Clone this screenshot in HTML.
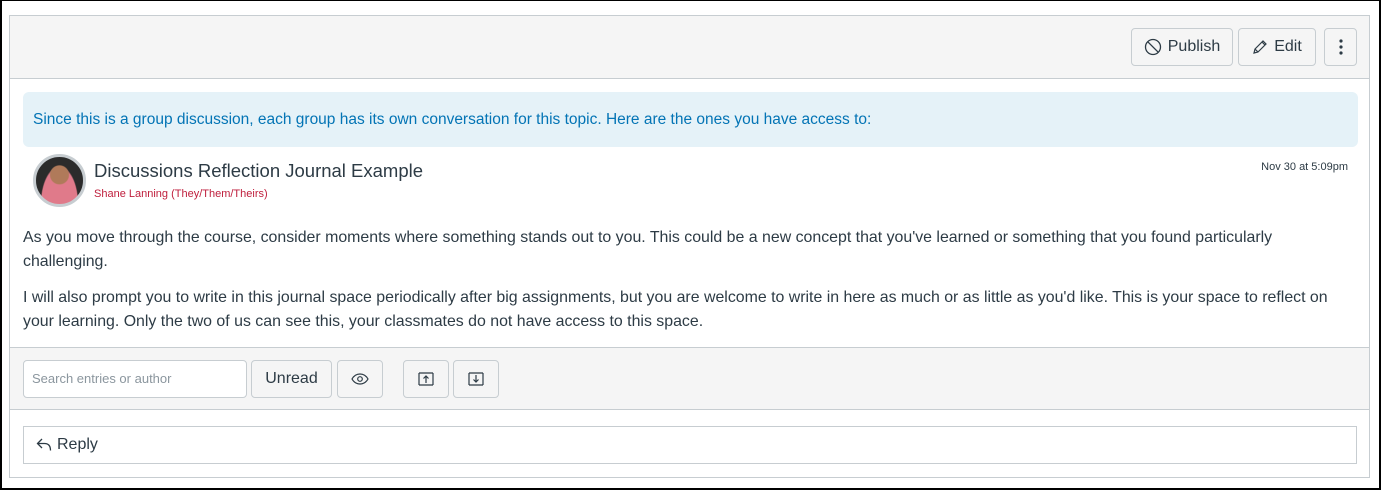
<!DOCTYPE html><html><head><style>
*{box-sizing:border-box;margin:0;padding:0}
body{width:1381px;height:490px;background:#fff;font-family:"Liberation Sans",sans-serif;color:#2d3b45;position:relative;overflow:hidden}
.outer{position:absolute;left:0;top:0;width:1381px;height:490px;border:2px solid #000;border-top-width:1px}
.panel{position:absolute;left:9px;top:15px;width:1361px;height:463px;border:1px solid #c7cdd1;background:#fff}
.hdr{position:absolute;left:0;top:0;width:100%;height:63px;background:#f5f5f5;border-bottom:1px solid #c7cdd1}
.btn{position:absolute;background:#f5f5f5;border:1px solid #c7cdd1;border-radius:4px;font-size:16px;color:#2d3b45;display:flex;align-items:center;justify-content:center;gap:6px}
.a{position:absolute;white-space:nowrap}
</style></head><body>
<div class="outer"></div>
<div class="panel">
<div class="hdr">
<div class="btn" style="left:1121px;top:12px;width:102px;height:38px"><svg width="18" height="18" viewBox="0 0 18 18" fill="none" stroke="#2d3b45" stroke-width="1.3"><circle cx="9" cy="9" r="7.5"/><line x1="3.8" y1="3.8" x2="14.2" y2="14.2"/></svg>Publish</div>
<div class="btn" style="left:1228px;top:12px;width:78px;height:38px"><svg width="16" height="16" viewBox="0 0 16 16" fill="none" stroke="#2d3b45" stroke-width="1.2"><path d="M2 14l1-4 8-8 3 3-8 8z M10 3l3 3 M3 10l3 3"/></svg>Edit</div>
<div class="btn" style="left:1314px;top:12px;width:33px;height:38px"><svg width="4" height="16"><circle cx="2" cy="2" r="1.6" fill="#2d3b45"/><circle cx="2" cy="8" r="1.6" fill="#2d3b45"/><circle cx="2" cy="14" r="1.6" fill="#2d3b45"/></svg></div>
</div>
<div class="a" style="left:13px;top:76px;width:1335px;height:55px;background:#e5f2f8;border-radius:6px"></div>
<div class="a" style="left:23px;top:95px;font-size:15.5px;color:#0374b5">Since this is a group discussion, each group has its own conversation for this topic. Here are the ones you have access to:</div>
<div class="a" style="left:23px;top:138px;width:53px;height:53px;border-radius:50%;border:3px solid #c7cdd1;background:radial-gradient(circle at 50% 38%,#b07a5a 0 9px,transparent 10px),radial-gradient(ellipse at 50% 100%,#e07a8a 0 18px,transparent 19px),#2b2b2b"></div>
<div class="a" style="left:84px;top:144px;font-size:18.5px;color:#2d3b45">Discussions Reflection Journal Example</div>
<div class="a" style="left:84px;top:172px;font-size:11px;color:#bf1e3c">Shane Lanning (They/Them/Theirs)</div>
<div class="a" style="right:21px;top:145px;font-size:11px;color:#2d3b45">Nov 30 at 5:09pm</div>
<div class="a" style="left:13px;top:210px;width:1335px;white-space:normal;font-size:15.9px;line-height:24px;color:#2d3b45">As you move through the course, consider moments where something stands out to you. This could be a new concept that you've learned or something that you found particularly challenging.</div>
<div class="a" style="left:13px;top:270px;width:1335px;white-space:normal;font-size:15.9px;line-height:24px;color:#2d3b45">I will also prompt you to write in this journal space periodically after big assignments, but you are welcome to write in here as much or as little as you'd like. This is your space to reflect on your learning. Only the two of us can see this, your classmates do not have access to this space.</div>
<div class="a" style="left:0;top:331px;width:100%;height:63px;background:#f5f5f5;border-top:1px solid #c7cdd1;border-bottom:1px solid #c7cdd1"></div>
<div class="a" style="left:13px;top:344px;width:224px;height:38px;background:#fff;border:1px solid #c7cdd1;border-radius:4px;font-size:13px;color:#8b969e;padding:10px 8px">Search entries or author</div>
<div class="btn" style="left:241px;top:344px;width:81px;height:38px">Unread</div>
<div class="btn" style="left:327px;top:344px;width:46px;height:38px"><svg width="18" height="12" viewBox="0 0 18 12" fill="none" stroke="#2d3b45" stroke-width="1.2"><path d="M1 6c2-3.5 5-5 8-5s6 1.5 8 5c-2 3.5-5 5-8 5s-6-1.5-8-5z"/><circle cx="9" cy="6" r="2.3"/></svg></div>
<div class="btn" style="left:393px;top:344px;width:46px;height:38px"><svg width="16" height="14" viewBox="0 0 16 14" fill="none" stroke="#2d3b45" stroke-width="1.2"><path d="M1 1h14M1 13h14M1 1v12M15 1v12M8 11V4M5.5 6.5L8 4l2.5 2.5"/></svg></div>
<div class="btn" style="left:443px;top:344px;width:46px;height:38px"><svg width="16" height="14" viewBox="0 0 16 14" fill="none" stroke="#2d3b45" stroke-width="1.2"><path d="M1 1h14M1 13h14M1 1v12M15 1v12M8 3v7M5.5 7.5L8 10l2.5-2.5"/></svg></div>
<div class="a" style="left:13px;top:410px;width:1334px;height:38px;border:1px solid #c7cdd1;background:#fff;font-size:16px;color:#2d3b45;padding:9px 12px;display:flex;align-items:center;gap:5px"><svg width="16" height="14" viewBox="0 0 16 14" fill="none" stroke="#2d3b45" stroke-width="1.3"><path d="M6 1L1.5 5.5 6 10M1.5 5.5h7c4 0 6 2.5 6 7"/></svg>Reply</div>
</div>
</body></html>
